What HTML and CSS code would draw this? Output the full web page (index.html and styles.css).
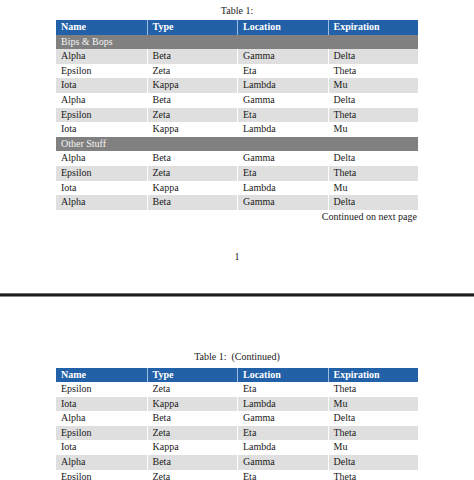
FILE: index.html
```html
<!DOCTYPE html>
<html>
<head>
<meta charset="utf-8">
<link rel="stylesheet" href="styles.css">
</head>
<body>
<div class="page page-first">
  <div class="caption">Table 1:</div>
  <div class="tbl">
    <div class="row head"><div>Name</div><div>Type</div><div>Location</div><div>Expiration</div></div>
    <div class="group">Bips &amp; Bops</div>
    <div class="row shade"><div>Alpha</div><div>Beta</div><div>Gamma</div><div>Delta</div></div>
    <div class="row"><div>Epsilon</div><div>Zeta</div><div>Eta</div><div>Theta</div></div>
    <div class="row shade"><div>Iota</div><div>Kappa</div><div>Lambda</div><div>Mu</div></div>
    <div class="row"><div>Alpha</div><div>Beta</div><div>Gamma</div><div>Delta</div></div>
    <div class="row shade"><div>Epsilon</div><div>Zeta</div><div>Eta</div><div>Theta</div></div>
    <div class="row"><div>Iota</div><div>Kappa</div><div>Lambda</div><div>Mu</div></div>
    <div class="group">Other Stuff</div>
    <div class="row"><div>Alpha</div><div>Beta</div><div>Gamma</div><div>Delta</div></div>
    <div class="row shade"><div>Epsilon</div><div>Zeta</div><div>Eta</div><div>Theta</div></div>
    <div class="row"><div>Iota</div><div>Kappa</div><div>Lambda</div><div>Mu</div></div>
    <div class="row shade"><div>Alpha</div><div>Beta</div><div>Gamma</div><div>Delta</div></div>
    <div class="cont">Continued on next page</div>
  </div>
  <div class="pagenum">1</div>
</div>
<div class="pagebreak"></div>
<div class="page page-second">
  <div class="caption">Table 1:&nbsp; (Continued)</div>
  <div class="tbl">
    <div class="row head"><div>Name</div><div>Type</div><div>Location</div><div>Expiration</div></div>
    <div class="row"><div>Epsilon</div><div>Zeta</div><div>Eta</div><div>Theta</div></div>
    <div class="row shade"><div>Iota</div><div>Kappa</div><div>Lambda</div><div>Mu</div></div>
    <div class="row"><div>Alpha</div><div>Beta</div><div>Gamma</div><div>Delta</div></div>
    <div class="row shade"><div>Epsilon</div><div>Zeta</div><div>Eta</div><div>Theta</div></div>
    <div class="row"><div>Iota</div><div>Kappa</div><div>Lambda</div><div>Mu</div></div>
    <div class="row shade"><div>Alpha</div><div>Beta</div><div>Gamma</div><div>Delta</div></div>
    <div class="row"><div>Epsilon</div><div>Zeta</div><div>Eta</div><div>Theta</div></div>
  </div>
</div>
</body>
</html>
```

FILE: styles.css
```css
html, body {
  margin: 0;
  padding: 0;
  background: #ffffff;
}

body {
  font-family: "Liberation Serif", "Times New Roman", serif;
  font-size: 10px;
  color: #1a1a1a;
  overflow: hidden;
}

.page {
  display: flex;
  flex-direction: column;
  align-items: center;
}

.page-first {
  padding-top: 5px;
  height: 288px;
}

.page-second {
  padding-top: 54px;
}

.caption {
  line-height: 12px;
  height: 12px;
  text-align: center;
  margin-bottom: 3px;
}

.page-second .caption {
  margin-bottom: 4.5px;
}

.tbl {
  width: 362px;
  display: flex;
  flex-direction: column;
}

.row {
  display: grid;
  grid-template-columns: repeat(4, 1fr);
  height: 14.6px;
  line-height: 14.6px;
}

.row > div {
  padding-left: 5px;
  white-space: nowrap;
}

.row > div + div {
  border-left: 1px solid #ffffff;
}

.shade {
  background: #dfdfdf;
}

.head {
  background: #2261a8;
  color: #ffffff;
  font-weight: bold;
}

.head > div + div {
  border-left: 1px solid #9dbde3;
}

.group {
  background: #808080;
  color: #f4f4f4;
  height: 14.6px;
  line-height: 14.6px;
  padding-left: 5px;
}

.cont {
  text-align: right;
  line-height: 14.6px;
  padding-right: 1px;
}

.pagenum {
  margin-top: 25.7px;
  line-height: 14.6px;
  text-align: center;
}

.pagebreak {
  height: 2px;
  background: #1c1c1c;
  border-top: 1px solid #6a6a6a;
  border-bottom: 1px solid #8c8c8c;
}
```
